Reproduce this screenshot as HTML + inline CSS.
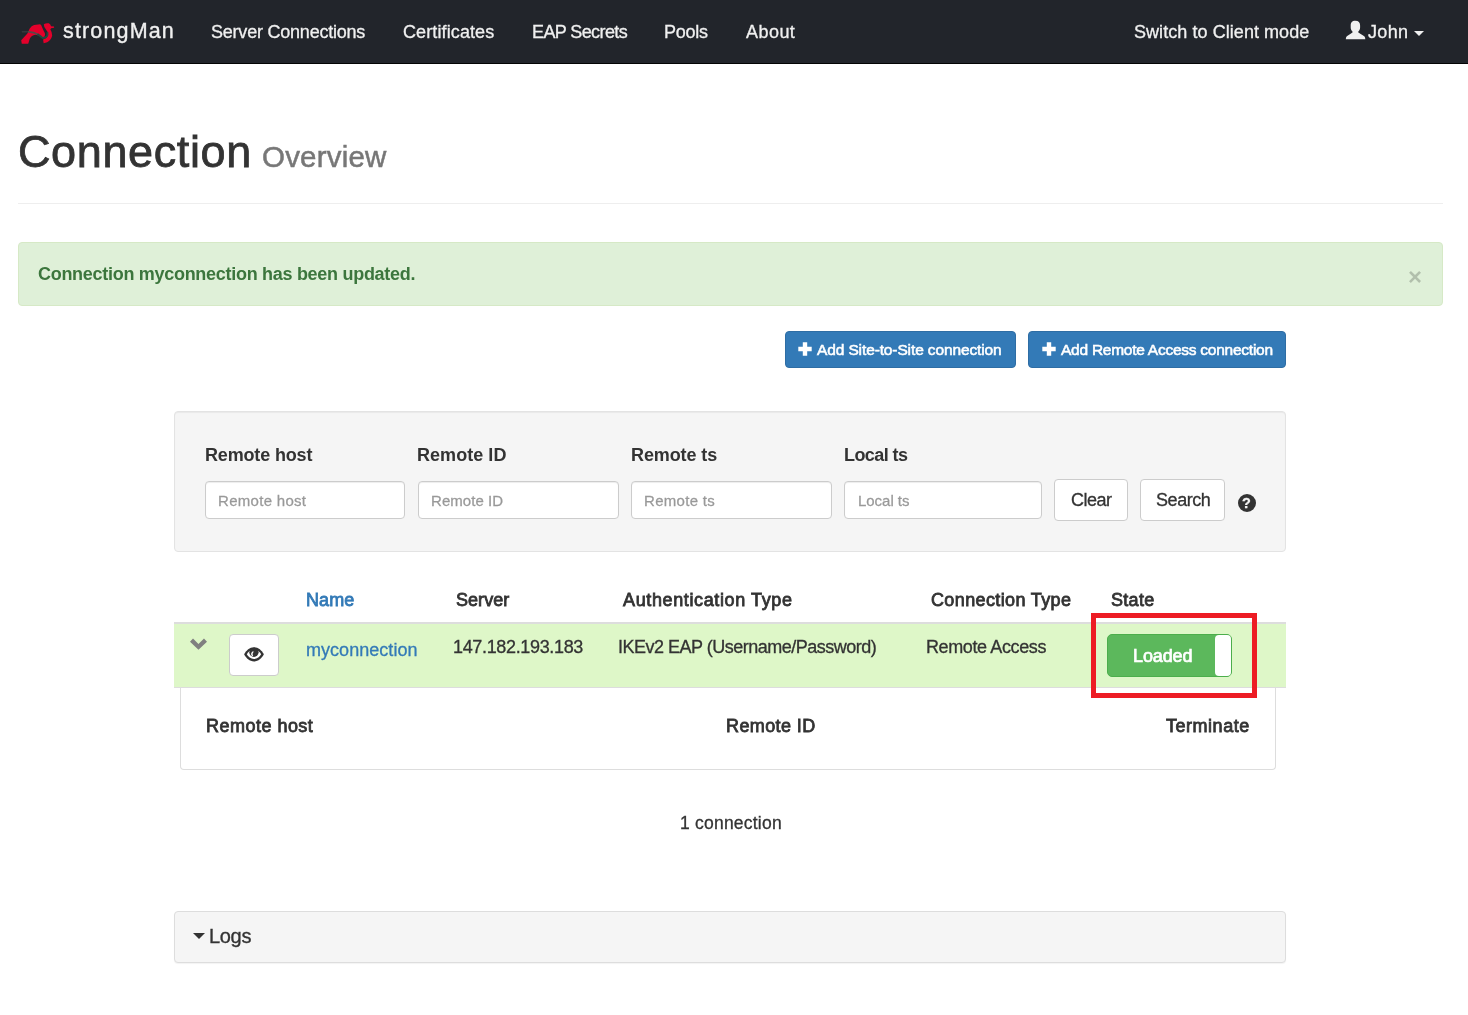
<!DOCTYPE html>
<html lang="en">
<head>
<meta charset="utf-8">
<title>strongMan - Connection Overview</title>
<style>
*{box-sizing:border-box;margin:0;padding:0}
html,body{width:1468px;height:1015px;background:#fff;overflow:hidden}
body{font-family:"Liberation Sans",sans-serif;color:#333;position:relative;font-size:18px}
.t{position:absolute;white-space:nowrap;line-height:1;will-change:transform}
.b{position:absolute}
svg{position:absolute;overflow:visible}
#nav{left:0;top:0;width:1468px;height:64px;background:#22252b;border-bottom:1px solid #040404}
#hr{left:18px;top:203px;width:1425px;height:1px;background:#eee}
#alert{left:18px;top:242px;width:1425px;height:64px;background:#dff0d8;border:1px solid #d6e9c6;border-radius:4px}
.btnp{top:331px;height:37px;background:#337ab7;border:1px solid #2e6da4;border-radius:4px}
#well{left:174px;top:411px;width:1112px;height:141px;background:#f5f5f5;border:1px solid #e3e3e3;border-radius:4px;box-shadow:inset 0 1px 1px rgba(0,0,0,.05)}
.inp{top:481px;height:38px;background:#fff;border:1px solid #ccc;border-radius:4px;box-shadow:inset 0 1px 1px rgba(0,0,0,.075)}
.btnd{top:479px;height:42px;background:#fff;border:1px solid #ccc;border-radius:4px}
#help{left:1238px;top:494px;width:18px;height:18px;border-radius:50%;background:#333}
#rowb{left:174px;top:622px;width:1112px;height:2px;background:#ddd}
#row{left:174px;top:624px;width:1112px;height:63px;background:#def7c8}
#rowl{left:174px;top:687px;width:1112px;height:1px;background:#ddd}
#eye{left:229px;top:634px;width:50px;height:42px;background:#fff;border:1px solid #ccc;border-radius:4px}
#red{left:1091px;top:613px;width:166px;height:85px;border:5px solid #ed1c24}
#tog{left:1107px;top:634px;width:125px;height:43px;background:#5cb85c;border:1px solid #4cae4c;border-radius:5px}
#hand{left:1215px;top:635px;width:16px;height:41px;background:#fff;border-radius:4px}
#sub{left:180px;top:688px;width:1096px;height:82px;border:1px solid #ddd;border-top:0;border-radius:0 0 4px 4px;background:#fff}
#logs{left:174px;top:911px;width:1112px;height:52px;background:#f5f5f5;border:1px solid #ddd;border-radius:4px;box-shadow:0 1px 1px rgba(0,0,0,.05)}
</style>
</head>
<body>
<div class="b" id="nav"></div>
<svg style="left:14px;top:16px;filter:blur(.35px)" width="48" height="34" viewBox="0 0 1433 1015">
<path d="M215 725 L400 520 L470 370 Q520 290 600 265 L780 245 Q820 260 835 330 L885 440 Q935 520 930 560 L905 625 L845 640 Q760 560 640 560 Q520 580 470 680 L425 825 L232 825 Z" fill="#e4002b"/>
<path d="M890 250 Q960 200 1040 220 Q1095 250 1105 305 L1195 312 L1198 352 L1108 362 L1085 400 Q1140 480 1140 580 Q1110 720 990 785 L885 815 L868 705 Q980 670 1020 570 Q1020 470 945 385 Q890 320 890 250 Z" fill="#e4002b"/>
<path d="M440 475 Q600 485 720 550" fill="none" stroke="#47504b" stroke-width="50" stroke-linecap="round" opacity=".9"/>
<path d="M720 550 Q800 600 850 655 Q940 660 985 600 Q1005 560 1000 500" fill="none" stroke="#1f4a40" stroke-width="55" stroke-linecap="round"/>
<path d="M250 470 L400 468" stroke="#484a4c" stroke-width="45" stroke-linecap="round" opacity=".55"/>
</svg>
<div class="t" id="brand" style="left:63.3px;top:21.4px;font-size:21.5px;color:#f0f0f0;letter-spacing:1.15px;-webkit-text-stroke:0.37px #f0f0f0;">strongMan</div>
<div class="t" id="n1" style="left:210.9px;top:23.1px;font-size:18px;color:#f0f0f0;letter-spacing:-0.22px;-webkit-text-stroke:0.31px #f0f0f0;">Server Connections</div><div class="t" id="n2" style="left:403.4px;top:23.1px;font-size:18px;color:#f0f0f0;letter-spacing:0.11px;-webkit-text-stroke:0.31px #f0f0f0;">Certificates</div><div class="t" id="n3" style="left:531.5px;top:23.1px;font-size:18px;color:#f0f0f0;letter-spacing:-0.6px;-webkit-text-stroke:0.31px #f0f0f0;">EAP Secrets</div><div class="t" id="n4" style="left:664.2px;top:23.1px;font-size:18px;color:#f0f0f0;letter-spacing:-0.25px;-webkit-text-stroke:0.31px #f0f0f0;">Pools</div><div class="t" id="n5" style="left:745.9px;top:23.1px;font-size:18px;color:#f0f0f0;letter-spacing:0.45px;-webkit-text-stroke:0.31px #f0f0f0;">About</div><div class="t" id="n6" style="left:1134.3px;top:23.1px;font-size:18px;color:#f0f0f0;letter-spacing:0.06px;-webkit-text-stroke:0.31px #f0f0f0;">Switch to Client mode</div>
<svg style="left:1345px;top:20px" width="21" height="20" viewBox="0 0 21 20">
<path d="M10.3 0.7 C13.6 0.7 15.1 2.6 15.1 5.4 L15.1 7.4 C15.1 9 14.4 10.4 13.3 11.4 L13.3 12.4 L19.3 16.2 Q20.3 17 20.3 19.3 L0.8 19.3 Q0.8 17 1.8 16.2 L7.5 12.4 L7.5 11.4 C6.4 10.4 5.7 9 5.7 7.4 L5.7 5.4 C5.7 2.6 7 0.7 10.3 0.7 Z" fill="#f0f0f0"/>
</svg>
<div class="t" id="n7" style="left:1368.0px;top:23.1px;font-size:18px;color:#f0f0f0;letter-spacing:0.33px;-webkit-text-stroke:0.31px #f0f0f0;">John</div>
<div class="b" style="left:1414px;top:31px;width:0;height:0;border-left:5px solid transparent;border-right:5px solid transparent;border-top:5px solid #f0f0f0"></div>
<div class="t" id="h1" style="left:17.5px;top:129.3px;font-size:45px;color:#333;letter-spacing:0.62px;-webkit-text-stroke:0.8px #333;">Connection</div><div class="t" id="h1s" style="left:261.7px;top:142.0px;font-size:29.5px;color:#777;letter-spacing:0.2px;-webkit-text-stroke:0.5px #777;">Overview</div>
<div class="b" id="hr"></div>
<div class="b" id="alert"></div>
<div class="t" id="al" style="left:38.0px;top:265.4px;font-size:18px;color:#3c763d;letter-spacing:-0.29px;font-weight:bold;">Connection myconnection has been updated.</div>
<div class="t" id="close" style="left:1408.2px;top:264.6px;font-size:24px;font-weight:bold;color:#000;opacity:.2">×</div>
<div class="b btnp" style="left:785px;width:231px"></div>
<div class="b btnp" style="left:1028px;width:258px"></div>
<svg style="left:798px;top:342px" width="14" height="14" viewBox="0 0 14 14"><path d="M4.8 0.3h4.4v4.5h4.5v4.4H9.2v4.5H4.8V9.2H0.3V4.8h4.5z" fill="#fff"/></svg><div class="t" id="b1" style="left:817.0px;top:342.0px;font-size:15.5px;color:#fff;letter-spacing:-0.12px;-webkit-text-stroke:0.56px #fff;">Add Site-to-Site connection</div>
<svg style="left:1041.6px;top:342px" width="14" height="14" viewBox="0 0 14 14"><path d="M4.8 0.3h4.4v4.5h4.5v4.4H9.2v4.5H4.8V9.2H0.3V4.8h4.5z" fill="#fff"/></svg><div class="t" id="b2" style="left:1060.5px;top:342.0px;font-size:15.5px;color:#fff;letter-spacing:-0.25px;-webkit-text-stroke:0.56px #fff;">Add Remote Access connection</div>
<div class="b" id="well"></div>
<div class="t" id="l1" style="left:204.6px;top:446.2px;font-size:18px;color:#333;letter-spacing:-0.16px;font-weight:bold;">Remote host</div><div class="t" id="l2" style="left:417.4px;top:446.2px;font-size:18px;color:#333;letter-spacing:0.05px;font-weight:bold;">Remote ID</div><div class="t" id="l3" style="left:630.9px;top:446.2px;font-size:18px;color:#333;letter-spacing:-0.1px;font-weight:bold;">Remote ts</div><div class="t" id="l4" style="left:844.2px;top:446.2px;font-size:18px;color:#333;letter-spacing:-0.57px;font-weight:bold;">Local ts</div>
<div class="b inp" style="left:205px;width:200px"></div>
<div class="b inp" style="left:418px;width:201px"></div>
<div class="b inp" style="left:631px;width:201px"></div>
<div class="b inp" style="left:844px;width:198px"></div>
<div class="t" id="p1" style="left:217.6px;top:493.3px;font-size:15px;color:#999;letter-spacing:0.3px;-webkit-text-stroke:0.26px #999;">Remote host</div><div class="t" id="p2" style="left:430.9px;top:493.3px;font-size:15px;color:#999;letter-spacing:0.05px;-webkit-text-stroke:0.26px #999;">Remote ID</div><div class="t" id="p3" style="left:643.9px;top:493.3px;font-size:15px;color:#999;letter-spacing:0.3px;-webkit-text-stroke:0.26px #999;">Remote ts</div><div class="t" id="p4" style="left:857.5px;top:493.3px;font-size:15px;color:#999;letter-spacing:-0.03px;-webkit-text-stroke:0.26px #999;">Local ts</div>
<div class="b btnd" style="left:1054px;width:74px"></div>
<div class="b btnd" style="left:1140px;width:85px"></div>
<div class="t" id="c1" style="left:1070.7px;top:491.3px;font-size:18px;color:#333;letter-spacing:-0.5px;-webkit-text-stroke:0.31px #333;">Clear</div><div class="t" id="c2" style="left:1155.5px;top:491.3px;font-size:18px;color:#333;letter-spacing:-0.44px;-webkit-text-stroke:0.31px #333;">Search</div>
<div class="b" id="help"></div>
<div class="t" id="q" style="left:1242px;top:496.4px;font-size:14.5px;font-weight:bold;color:#f5f5f5;-webkit-text-stroke:.3px #f5f5f5">?</div>
<div class="t" id="t1" style="left:306.3px;top:590.7px;font-size:18px;color:#337ab7;letter-spacing:0.07px;-webkit-text-stroke:0.8px #337ab7;">Name</div><div class="t" id="t2" style="left:456.2px;top:590.7px;font-size:18px;color:#333;letter-spacing:0.04px;-webkit-text-stroke:0.8px #333;">Server</div><div class="t" id="t3" style="left:623.4px;top:590.7px;font-size:18px;color:#333;letter-spacing:0.62px;-webkit-text-stroke:0.8px #333;">Authentication Type</div><div class="t" id="t4" style="left:930.8px;top:590.7px;font-size:18px;color:#333;letter-spacing:0.37px;-webkit-text-stroke:0.8px #333;">Connection Type</div><div class="t" id="t5" style="left:1111.2px;top:590.7px;font-size:18px;color:#333;letter-spacing:0.3px;-webkit-text-stroke:0.8px #333;">State</div>
<div class="b" id="rowb"></div>
<div class="b" id="row"></div>
<div class="b" id="rowl"></div>
<div class="b" id="sub"></div>
<svg style="left:190px;top:637.6px" width="17" height="12" viewBox="0 0 225 150">
<path d="M0 45 L40 3 L112 75 L185 3 L225 45 L112 150 Z" fill="#808080"/></svg>
<div class="b" id="eye"></div>
<svg style="left:244px;top:646.6px" width="20" height="14.6" viewBox="0 0 20 14.6">
<path d="M0.1 7.3 C2.2 3.4 5.6 0.2 10 0.2 C14.4 0.2 17.8 3.4 19.9 7.3 C17.8 11.2 14.4 14.4 10 14.4 C5.6 14.4 2.2 11.2 0.1 7.3 Z" fill="#333"/>
<path d="M2.8 7.3 C4.2 4.8 6.7 2.5 10 2.5 C13.3 2.5 15.8 4.8 17.2 7.3 C15.8 9.9 13.3 12 10 12 C6.7 12 4.2 9.9 2.8 7.3 Z" fill="#fff"/>
<circle cx="9.95" cy="5.3" r="4.65" fill="#333"/>
<path d="M8.7 4.4 C7.5 5 6.9 6.4 7.2 7.8 C7.5 8.8 8.4 9.3 9.1 8.9 C8.3 7.6 8.5 6 9.7 5.1 C9.6 4.5 9.2 4.2 8.7 4.4 Z" fill="#fff"/>
</svg>
<div class="t" id="r1" style="left:305.8px;top:640.8px;font-size:18px;color:#337ab7;letter-spacing:0.04px;-webkit-text-stroke:0.31px #337ab7;">myconnection</div><div class="t" id="r2" style="left:452.6px;top:637.7px;font-size:18px;color:#333;letter-spacing:-0.34px;-webkit-text-stroke:0.31px #333;">147.182.193.183</div><div class="t" id="r3" style="left:617.6px;top:637.7px;font-size:18px;color:#333;letter-spacing:-0.5px;-webkit-text-stroke:0.31px #333;">IKEv2 EAP (Username/Password)</div><div class="t" id="r4" style="left:926.2px;top:637.7px;font-size:18px;color:#333;letter-spacing:-0.38px;-webkit-text-stroke:0.31px #333;">Remote Access</div>
<div class="b" id="tog"></div>
<div class="b" id="hand"></div>
<div class="t" id="ld" style="left:1132.7px;top:646.5px;font-size:18px;color:#fff;letter-spacing:-0.12px;-webkit-text-stroke:0.7px #fff;">Loaded</div>
<div class="b" id="red"></div>
<div class="t" id="s1" style="left:205.8px;top:716.8px;font-size:18px;color:#333;letter-spacing:0.48px;-webkit-text-stroke:0.8px #333;">Remote host</div><div class="t" id="s2" style="left:726.4px;top:716.8px;font-size:18px;color:#333;letter-spacing:0.4px;-webkit-text-stroke:0.8px #333;">Remote ID</div><div class="t" id="s3" style="left:1165.9px;top:716.8px;font-size:18px;color:#333;letter-spacing:0.52px;-webkit-text-stroke:0.8px #333;">Terminate</div>
<div class="t" id="cn" style="left:679.6px;top:815.0px;font-size:17.5px;color:#333;letter-spacing:0.22px;-webkit-text-stroke:0.3px #333;">1 connection</div>
<div class="b" id="logs"></div>
<div class="b" style="left:193px;top:933px;width:0;height:0;border-left:6px solid transparent;border-right:6px solid transparent;border-top:6.5px solid #333"></div>
<div class="t" id="lg" style="left:209.4px;top:925.9px;font-size:20px;color:#333;letter-spacing:-0.33px;-webkit-text-stroke:0.34px #333;">Logs</div>
</body>
</html>
